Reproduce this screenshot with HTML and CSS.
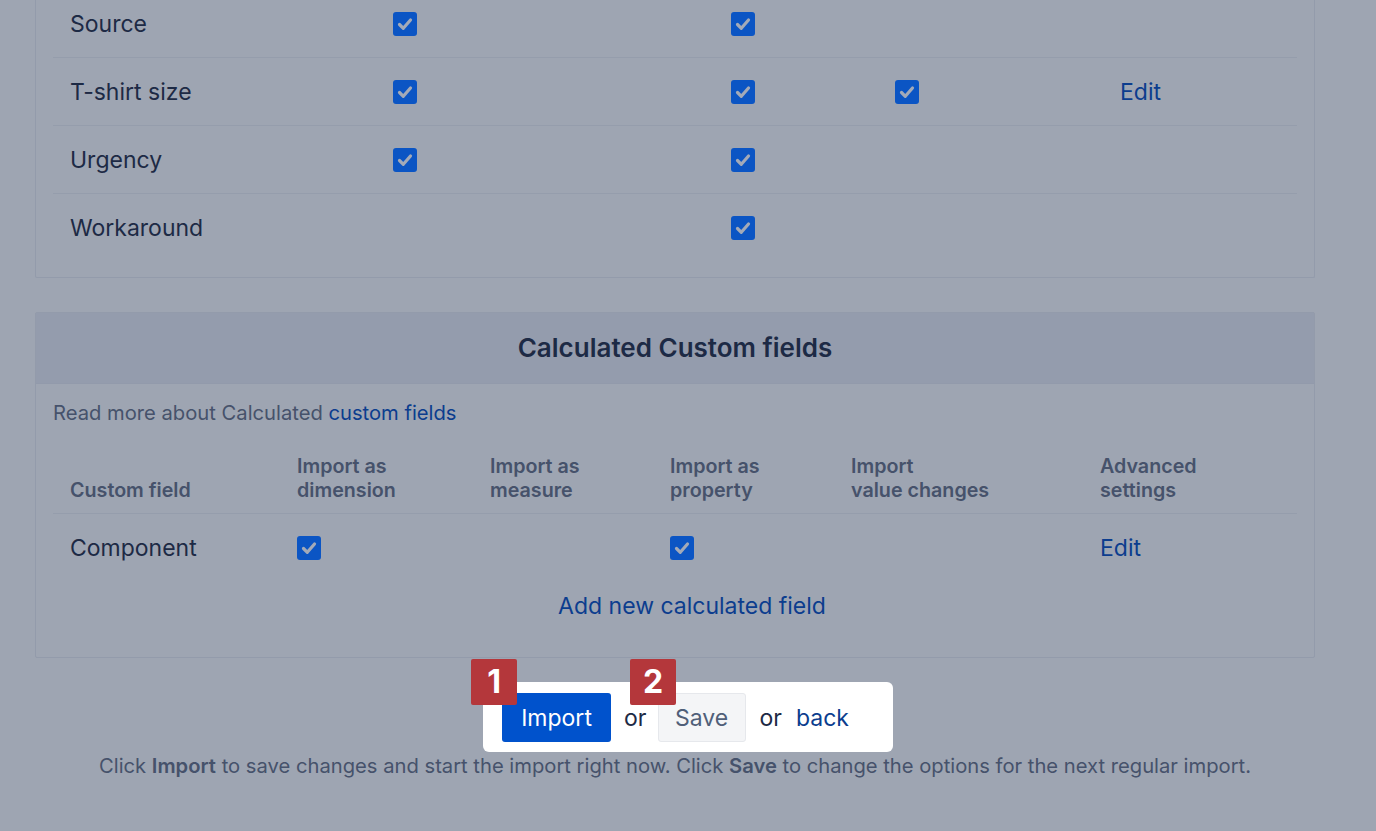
FILE: index.html
```html
<!DOCTYPE html>
<html>
<head>
<meta charset="utf-8">
<link rel="stylesheet" href="styles.css">
</head>
<body>
<div class="page">
  <section class="panel panel-fields">
    <div class="frow first">
      <div class="name">Source</div>
      <div><span class="cb"><svg viewBox="0 0 24 24"><path d="M6.5 12.5l3.8 3.8 7.2-8.3"/></svg></span></div>
      <div><span class="cb"><svg viewBox="0 0 24 24"><path d="M6.5 12.5l3.8 3.8 7.2-8.3"/></svg></span></div>
      <div></div>
      <div></div>
    </div>
    <div class="frow">
      <div class="name">T-shirt size</div>
      <div><span class="cb"><svg viewBox="0 0 24 24"><path d="M6.5 12.5l3.8 3.8 7.2-8.3"/></svg></span></div>
      <div><span class="cb"><svg viewBox="0 0 24 24"><path d="M6.5 12.5l3.8 3.8 7.2-8.3"/></svg></span></div>
      <div><span class="cb"><svg viewBox="0 0 24 24"><path d="M6.5 12.5l3.8 3.8 7.2-8.3"/></svg></span></div>
      <div><a class="link">Edit</a></div>
    </div>
    <div class="frow">
      <div class="name">Urgency</div>
      <div><span class="cb"><svg viewBox="0 0 24 24"><path d="M6.5 12.5l3.8 3.8 7.2-8.3"/></svg></span></div>
      <div><span class="cb"><svg viewBox="0 0 24 24"><path d="M6.5 12.5l3.8 3.8 7.2-8.3"/></svg></span></div>
      <div></div>
      <div></div>
    </div>
    <div class="frow last">
      <div class="name">Workaround</div>
      <div></div>
      <div><span class="cb"><svg viewBox="0 0 24 24"><path d="M6.5 12.5l3.8 3.8 7.2-8.3"/></svg></span></div>
      <div></div>
      <div></div>
    </div>
  </section>

  <section class="panel panel-calc">
    <h2 class="panel-head">Calculated Custom fields</h2>
    <div class="panel-body">
      <p class="intro">Read more about Calculated <a class="link">custom fields</a></p>
      <div class="crow chead">
        <div>Custom field</div>
        <div>Import as<br>dimension</div>
        <div>Import as<br>measure</div>
        <div>Import as<br>property</div>
        <div>Import<br>value changes</div>
        <div>Advanced<br>settings</div>
      </div>
      <div class="crow cbody">
        <div class="name">Component</div>
        <div><span class="cb"><svg viewBox="0 0 24 24"><path d="M6.5 12.5l3.8 3.8 7.2-8.3"/></svg></span></div>
        <div></div>
        <div><span class="cb"><svg viewBox="0 0 24 24"><path d="M6.5 12.5l3.8 3.8 7.2-8.3"/></svg></span></div>
        <div></div>
        <div><a class="link">Edit</a></div>
      </div>
      <div class="addnew"><a class="link">Add new calculated field</a></div>
    </div>
  </section>

  <div class="actions-wrap">
    <div class="actions">
      <button class="btn btn-primary">Import</button>
      <span class="or or1">or</span>
      <button class="btn btn-default">Save</button>
      <span class="or or2">or</span>
      <a class="link back">back</a>
      <span class="badge badge-1">1</span>
      <span class="badge badge-2">2</span>
    </div>
  </div>

  <p class="note">Click <b>Import</b> to save changes and start the import right now. Click <b>Save</b> to change the options for the next regular import.</p>
</div>
</body>
</html>
```

FILE: styles.css
```css
html, body {
  margin: 0;
  padding: 0;
  background: #9ea5b2;
  height: 100%;
  overflow: hidden;
}
body {
  font-family: Inter, "Noto Sans", "Liberation Sans", sans-serif;
  color: #1d2a45;
}
.page {
  padding: 0 61px 0 35px;
}
.panel {
  border: 1px solid #939bab;
  border-radius: 2px;
}
.panel-fields {
  margin-top: -10px;
  border-top: none;
  padding: 0 17px 16px;
}
.frow {
  display: grid;
  grid-template-columns: 323px 338px 164px 225px 1fr;
  align-items: center;
  height: 67px;
  border-bottom: 1px solid #959dac;
  font-size: 23px;
}
.frow.last {
  border-bottom: none;
}
.frow > div {
  padding-left: 17px;
  display: flex;
  align-items: center;
}
.cb {
  display: inline-block;
  width: 24px;
  height: 24px;
  background: #0b55c4;
  border-radius: 3px;
}
.cb svg {
  display: block;
  width: 24px;
  height: 24px;
  fill: none;
  stroke: #a3aab8;
  stroke-width: 3.2;
  stroke-linecap: round;
  stroke-linejoin: round;
}
.link {
  color: #0c3d8e;
  text-decoration: none;
}
.panel-calc {
  margin-top: 34px;
}
.panel-head {
  margin: 0;
  height: 70px;
  line-height: 70px;
  background: #949cad;
  border-bottom: 1px solid #929aab;
  text-align: center;
  font-size: 26px;
  font-weight: 600;
  color: #1d2a45;
}
.panel-body {
  padding: 0 17px 38px;
}
.intro {
  margin: 0;
  padding-top: 17px;
  font-size: 20.2px;
  line-height: 24px;
  color: #46526b;
}
.crow {
  display: grid;
  grid-template-columns: 227px 193px 180px 181px 249px 1fr;
}
.crow > div {
  padding-left: 17px;
}
.chead {
  margin-top: 29px;
  align-items: end;
  font-size: 19.7px;
  font-weight: 600;
  line-height: 24px;
  color: #46526b;
  padding-bottom: 11px;
  border-bottom: 1px solid #959dac;
}
.cbody {
  height: 67px;
  align-items: center;
  font-size: 23px;
}
.cbody > div {
  display: flex;
  align-items: center;
}
.addnew {
  margin-top: 12px;
  text-align: center;
  font-size: 23px;
  line-height: 26px;
  padding-left: 34px;
}
.actions-wrap {
  display: flex;
  justify-content: center;
  margin-top: 24px;
  padding-left: 26px;
}
.actions {
  position: relative;
  display: flex;
  align-items: center;
  background: #fff;
  border-radius: 6px;
  padding: 11px 44px 10px 19px;
  font-size: 23px;
  color: #1d2a45;
}
.btn {
  font-family: inherit;
  font-size: 23px;
  height: 49px;
  border-radius: 3px;
  padding: 0;
  cursor: pointer;
}
.btn-primary {
  background: #0052cc;
  color: #fff;
  border: none;
  width: 109px;
}
.btn-default {
  background: #f4f5f7;
  color: #505f79;
  border: 1px solid #e6e8ec;
  width: 88px;
}
.or1 {
  margin: 0 11px 0 13px;
}
.or2 {
  margin: 0 14px 0 14px;
}
.badge {
  position: absolute;
  top: -23px;
  width: 46px;
  height: 46px;
  background: #b4373b;
  color: #fff;
  font-weight: 700;
  font-size: 32px;
  line-height: 46px;
  text-align: center;
  border-radius: 2px;
}
.badge-1 { left: -12px; }
.badge-2 { left: 147px; }
.note {
  margin: 2px 0 0;
  text-align: center;
  font-size: 20.2px;
  line-height: 24px;
  color: #46526b;
}
.note b {
  font-weight: 600;
}
```
